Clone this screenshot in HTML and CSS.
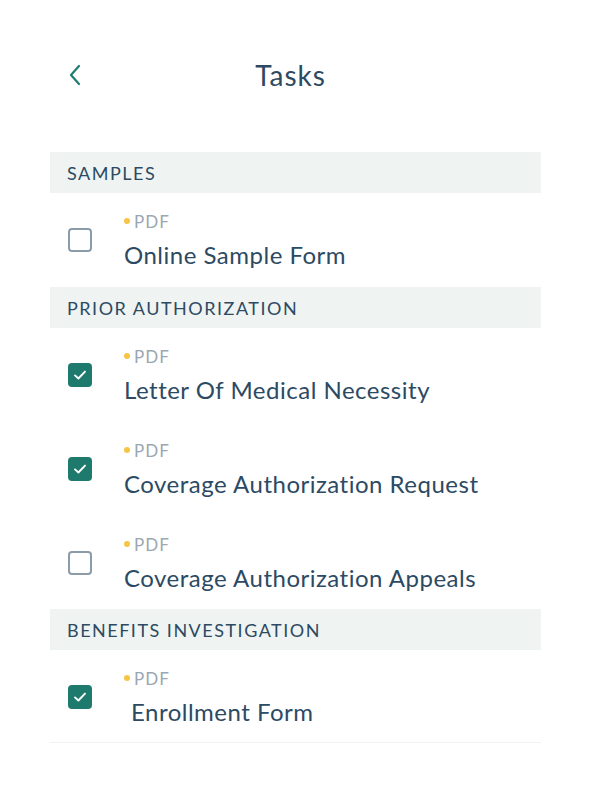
FILE: index.html
```html
<!DOCTYPE html>
<html>
<head>
<meta charset="utf-8">
<link rel="stylesheet" href="styles.css">
</head>
<body>
<div class="page">
  <header class="topbar">
    <button class="back" aria-label="Back">
      <svg width="14" height="22" viewBox="0 0 14 22"><path d="M11 2 L3 11 L11 20" fill="none" stroke="#1f7d70" stroke-width="2.2" stroke-linecap="round" stroke-linejoin="round"/></svg>
    </button>
    <h1 class="title">Tasks</h1>
  </header>

  <section>
    <div class="section-head">SAMPLES</div>
    <div class="task">
      <span class="box"></span>
      <div class="info"><div class="type"><span class="dot"></span>PDF</div><div class="name">Online Sample Form</div></div>
    </div>
  </section>

  <section>
    <div class="section-head">PRIOR AUTHORIZATION</div>
    <div class="task">
      <span class="box checked"><svg width="16" height="16" viewBox="0 0 16 16"><path d="M3 8.4 L6.4 11.5 L13 4.6" fill="none" stroke="#fff" stroke-width="1.9" stroke-linecap="round" stroke-linejoin="round"/></svg></span>
      <div class="info"><div class="type"><span class="dot"></span>PDF</div><div class="name">Letter Of Medical Necessity</div></div>
    </div>
    <div class="task">
      <span class="box checked"><svg width="16" height="16" viewBox="0 0 16 16"><path d="M3 8.4 L6.4 11.5 L13 4.6" fill="none" stroke="#fff" stroke-width="1.9" stroke-linecap="round" stroke-linejoin="round"/></svg></span>
      <div class="info"><div class="type"><span class="dot"></span>PDF</div><div class="name">Coverage Authorization Request</div></div>
    </div>
    <div class="task short">
      <span class="box"></span>
      <div class="info"><div class="type"><span class="dot"></span>PDF</div><div class="name">Coverage Authorization Appeals</div></div>
    </div>
  </section>

  <section>
    <div class="section-head">BENEFITS INVESTIGATION</div>
    <div class="task last">
      <span class="box checked"><svg width="16" height="16" viewBox="0 0 16 16"><path d="M3 8.4 L6.4 11.5 L13 4.6" fill="none" stroke="#fff" stroke-width="1.9" stroke-linecap="round" stroke-linejoin="round"/></svg></span>
      <div class="info"><div class="type"><span class="dot"></span>PDF</div><div class="name indent">Enrollment Form</div></div>
    </div>
  </section>
</div>
</body>
</html>
```

FILE: styles.css
```css
* { box-sizing: border-box; }
html, body { margin: 0; padding: 0; background: #fff; }
body {
  font-family: "Lato", "Noto Sans", sans-serif;
  color: #2c4a63;
  font-variant-ligatures: none;
}
.page { width: 592px; padding: 0 51px 0 50px; }

.topbar {
  position: relative;
  height: 152px;
  display: flex;
  align-items: flex-start;
  justify-content: center;
  padding-top: 55px;
  padding-right: 10px;
}
.back {
  position: absolute;
  left: 18px;
  top: 64px;
  border: 0;
  background: none;
  padding: 0;
  display: flex;
}
.title {
  margin: 0;
  font-size: 28px;
  font-weight: 400;
  letter-spacing: 1px;
  line-height: 40px;
  color: #2d4a62;
}

.section-head {
  height: 41px;
  background: #eff4f3;
  padding-left: 17px;
  display: flex;
  align-items: center;
  font-size: 18px;
  letter-spacing: 1.5px;
  color: #2d4a62;
}

.task {
  height: 94px;
  display: flex;
  align-items: flex-start;
}
.task.short { height: 93px; }
.task.last { border-bottom: 1px solid #f0f2f3; height: 93px; }

.box {
  flex: none;
  width: 24px;
  height: 24px;
  margin: 35px 0 0 18px;
  border: 2px solid #8c9ba8;
  border-radius: 4px;
  display: flex;
  align-items: center;
  justify-content: center;
}
.box.checked { background: #1d7a6c; border-color: #1d7a6c; }

.info { margin-left: 32px; padding-top: 19px; }
.type {
  display: flex;
  align-items: center;
  font-size: 17px;
  letter-spacing: 1px;
  line-height: 20px;
  color: #9ba7b3;
}
.dot {
  width: 6px;
  height: 6px;
  border-radius: 50%;
  background: #f6c545;
  margin-right: 4px;
  margin-bottom: 2px;
}
.name {
  margin-top: 8px;
  font-size: 24px;
  letter-spacing: 0.5px;
  line-height: 30px;
  color: #2c4a63;
}
.name.indent { padding-left: 7px; }
```
